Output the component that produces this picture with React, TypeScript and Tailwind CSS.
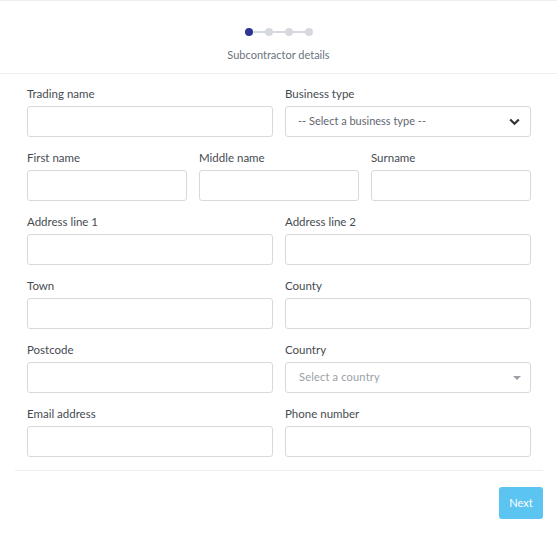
import React from "react";

const Label = ({ children }: { children: React.ReactNode }) => (
  <label className="block text-[11.5px] leading-[13px] text-[#454b52] mb-[6px]">{children}</label>
);

const Input = () => (
  <input
    type="text"
    className="block w-full h-[31px] rounded-[3px] border border-[#d5dadf] bg-white px-3 text-[11px] outline-none"
  />
);

const Field = ({ label, children }: { label: string; children?: React.ReactNode }) => (
  <div className="flex flex-col">
    <Label>{label}</Label>
    {children ?? <Input />}
  </div>
);

export default function App() {
  return (
    <div className="w-[557px] h-[533px] bg-white" style={{ fontFamily: "Lato, 'Noto Sans', sans-serif" }}>
      <div className="border-t border-b border-[#eceef0] h-[74px] flex flex-col items-center">
        <div className="mt-[27px] flex items-center">
          <span className="w-[8px] h-[8px] rounded-full bg-[#2c3590]" />
          <span className="w-[12px] h-[2px] bg-[#d6d9de]" />
          <span className="w-[8px] h-[8px] rounded-full bg-[#d6d9de]" />
          <span className="w-[12px] h-[2px] bg-[#d6d9de]" />
          <span className="w-[8px] h-[8px] rounded-full bg-[#d6d9de]" />
          <span className="w-[12px] h-[2px] bg-[#d6d9de]" />
          <span className="w-[8px] h-[8px] rounded-full bg-[#d6d9de]" />
        </div>
        <div className="mt-[12px] text-[11px] leading-[13px] text-[#6b7280]">Subcontractor details</div>
      </div>

      <div className="ml-[15px] mr-[14px]">
        <div className="pl-[12px] pr-[12px] pt-[13px] pb-[13px] flex flex-col gap-[14px] border-b border-[#eceef0]">
          <div className="grid grid-cols-2 gap-x-[12px]">
            <Field label="Trading name" />
            <Field label="Business type">
              <div className="relative h-[31px] rounded-[3px] border border-[#d5dadf] bg-white flex items-center pl-[12px] pr-[10px]">
                <span className="text-[11px] text-[#5f6670] flex-1">-- Select a business type --</span>
                <svg width="11" height="8" viewBox="0 0 11 8" className="text-[#333]">
                  <path d="M1.2 1.5 L5.5 5.8 L9.8 1.5" fill="none" stroke="currentColor" strokeWidth="2.2" />
                </svg>
              </div>
            </Field>
          </div>
          <div className="grid grid-cols-3 gap-x-[12px]">
            <Field label="First name" />
            <Field label="Middle name" />
            <Field label="Surname" />
          </div>
          <div className="grid grid-cols-2 gap-x-[12px]">
            <Field label="Address line 1" />
            <Field label="Address line 2" />
          </div>
          <div className="grid grid-cols-2 gap-x-[12px]">
            <Field label="Town" />
            <Field label="County" />
          </div>
          <div className="grid grid-cols-2 gap-x-[12px]">
            <Field label="Postcode" />
            <Field label="Country">
              <div className="relative h-[31px] rounded-[3px] border border-[#d5dadf] bg-white flex items-center pl-[13px] pr-[9px]">
                <span className="text-[11px] text-[#9aa0a6] flex-1 tracking-[0.2px]">Select a country</span>
                <svg width="8" height="4" viewBox="0 0 8 4">
                  <path d="M0 0 L8 0 L4 4 Z" fill="#9aa0a6" />
                </svg>
              </div>
            </Field>
          </div>
          <div className="grid grid-cols-2 gap-x-[12px]">
            <Field label="Email address" />
            <Field label="Phone number" />
          </div>
        </div>
        <div className="flex justify-end pt-[16px]">
          <button className="w-[44px] h-[32px] rounded-[3px] bg-[#5bc4f1] text-white text-[11px]">Next</button>
        </div>
      </div>
    </div>
  );
}
